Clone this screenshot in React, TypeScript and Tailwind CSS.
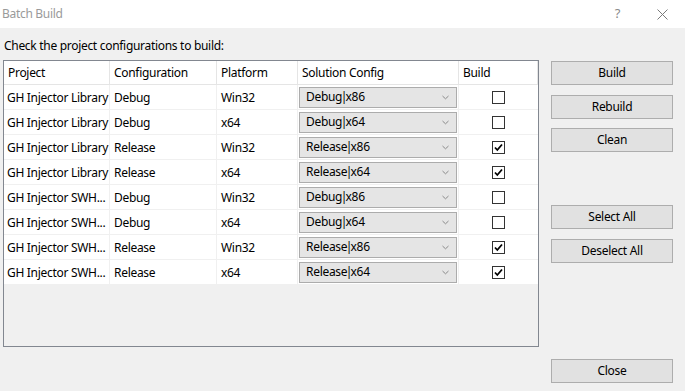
import React from 'react'

// Batch Build dialog (Visual Studio style)

type Row = {
  project: string
  config: string
  platform: string
  solution: string
  build: boolean
}

const rows: Row[] = [
  { project: 'GH Injector Library', config: 'Debug', platform: 'Win32', solution: 'Debug|x86', build: false },
  { project: 'GH Injector Library', config: 'Debug', platform: 'x64', solution: 'Debug|x64', build: false },
  { project: 'GH Injector Library', config: 'Release', platform: 'Win32', solution: 'Release|x86', build: true },
  { project: 'GH Injector Library', config: 'Release', platform: 'x64', solution: 'Release|x64', build: true },
  { project: 'GH Injector SWH...', config: 'Debug', platform: 'Win32', solution: 'Debug|x86', build: false },
  { project: 'GH Injector SWH...', config: 'Debug', platform: 'x64', solution: 'Debug|x64', build: false },
  { project: 'GH Injector SWH...', config: 'Release', platform: 'Win32', solution: 'Release|x86', build: true },
  { project: 'GH Injector SWH...', config: 'Release', platform: 'x64', solution: 'Release|x64', build: true },
]

const cols = 'grid grid-cols-[106px_107px_81px_161px_79px]'

function Checkbox({ checked }: { checked: boolean }) {
  return (
    <div className="w-[13px] h-[13px] border border-[#333333] bg-white flex items-center justify-center">
      {checked && (
        <svg width="11" height="11" viewBox="0 0 11 11">
          <path d="M2 5.5 L4.3 8 L9 2.5" fill="none" stroke="#000" strokeWidth="1.8" />
        </svg>
      )}
    </div>
  )
}

function Combo({ value }: { value: string }) {
  const [cfg, plat] = value.split('|')
  return (
    <div className="ml-[1px] w-[158px] h-[21px] border border-[#acacac] bg-[#e5e5e5] flex items-center pl-[6px] pr-[7px]">
      <span className="flex-1">
        {cfg}
        <span className="mx-[-1.5px]">|</span>
        {plat}
      </span>
      <svg width="7" height="5" viewBox="0 0 7 5">
        <path d="M0.5 1 L3.5 3.8 L6.5 1" fill="none" stroke="#8a8a8a" strokeWidth="1" />
      </svg>
    </div>
  )
}

function Button({ label, className = '' }: { label: string; className?: string }) {
  return (
    <div
      className={`w-[122px] h-[24px] border border-[#adadad] bg-[#e1e1e1] flex items-center justify-center text-black ${className}`}
    >
      {label}
    </div>
  )
}

export default function App() {
  return (
    <div
      className="w-[685px] h-[391px] bg-[#f0f0f0] text-[12px] tracking-[-0.3px] text-black overflow-hidden"
      style={{ fontFamily: '"Noto Sans", "Open Sans", sans-serif' }}
    >
      {/* Title bar */}
      <div className="h-[28px] bg-white flex items-center">
        <span className="pl-[2px] text-[#9a9a9a] flex-1">Batch Build</span>
        <span className="text-[#8a8a8a] text-[13px] mr-[37px]">?</span>
        <svg width="11" height="11" viewBox="0 0 11 11" className="mr-[17px]">
          <path d="M0.5 0.5 L10.5 10.5 M10.5 0.5 L0.5 10.5" stroke="#7a7a7a" strokeWidth="1" />
        </svg>
      </div>

      <div className="pl-[4px] pt-[10px] h-[32px] leading-[16px]">Check the project configurations to build:</div>

      <div className="flex">
        {/* Table */}
        <div className="ml-[3px] w-[536px] h-[287px] border border-[#828790]">
          <div className={`${cols} h-[24px] bg-white border-b border-[#e5e5e5]`}>
            {['Project', 'Configuration', 'Platform', 'Solution Config', 'Build'].map((h) => (
              <div key={h} className="border-r border-[#e5e5e5] pl-[4px] flex items-center">
                {h}
              </div>
            ))}
          </div>
          {rows.map((r, i) => (
            <div key={i} className={`${cols} h-[25px] bg-white border-b border-[#f0f0f0]`}>
              <div className="border-r border-[#f0f0f0] pl-[3px] pt-[1px] flex items-center whitespace-nowrap overflow-hidden">
                {r.project}
              </div>
              <div className="border-r border-[#f0f0f0] pl-[4px] pt-[1px] flex items-center">{r.config}</div>
              <div className="border-r border-[#f0f0f0] pl-[4px] pt-[1px] flex items-center">{r.platform}</div>
              <div className="border-r border-[#f0f0f0] flex items-center">
                <Combo value={r.solution} />
              </div>
              <div className="flex items-center justify-center pr-[1px]">
                <Checkbox checked={r.build} />
              </div>
            </div>
          ))}
        </div>

        {/* Buttons */}
        <div className="ml-[12px] mt-[1px] flex flex-col">
          <Button label="Build" />
          <Button label="Rebuild" className="mt-[10px]" />
          <Button label="Clean" className="mt-[9px]" />
          <Button label="Select All" className="mt-[53px]" />
          <Button label="Deselect All" className="mt-[10px]" />
          <Button label="Close" className="mt-[96px]" />
        </div>
      </div>
    </div>
  )
}
